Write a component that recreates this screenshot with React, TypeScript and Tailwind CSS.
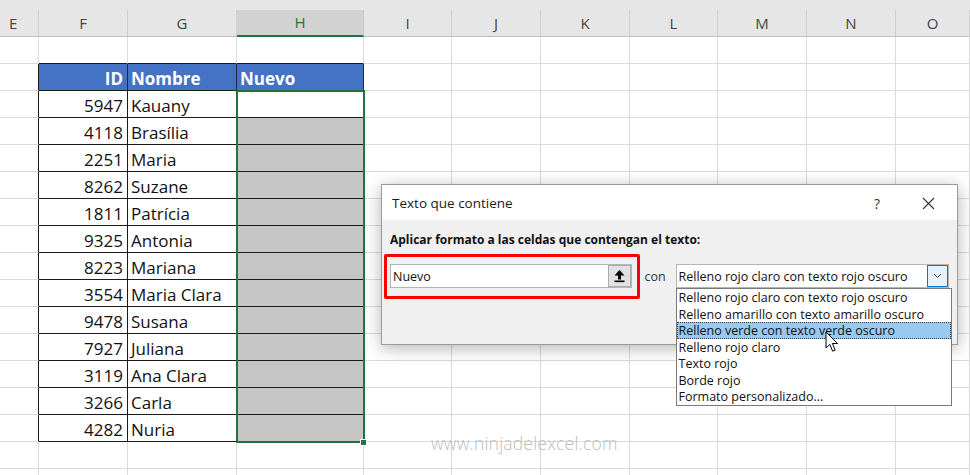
import React from "react";

type Col = { id: string; w: string; head: string };

const COLS: Col[] = [
  { id: "E", w: "w-[39px]", head: "justify-start pl-[9px]" },
  { id: "F", w: "w-[89px]", head: "justify-center" },
  { id: "G", w: "w-[109px]", head: "justify-center" },
  { id: "H", w: "w-[127px]", head: "justify-center" },
  { id: "I", w: "w-[88px]", head: "justify-center" },
  { id: "J", w: "w-[89px]", head: "justify-center" },
  { id: "K", w: "w-[89px]", head: "justify-center" },
  { id: "L", w: "w-[88px]", head: "justify-center" },
  { id: "M", w: "w-[89px]", head: "justify-center" },
  { id: "N", w: "w-[89px]", head: "justify-center" },
  { id: "O", w: "w-[74px]", head: "justify-center" },
];

const PEOPLE: [string, string][] = [
  ["5947", "Kauany"],
  ["4118", "Brasília"],
  ["2251", "Maria"],
  ["8262", "Suzane"],
  ["1811", "Patrícia"],
  ["9325", "Antonia"],
  ["8223", "Mariana"],
  ["3554", "Maria Clara"],
  ["9478", "Susana"],
  ["7927", "Juliana"],
  ["3119", "Ana Clara"],
  ["3266", "Carla"],
  ["4282", "Nuria"],
];

const OPTIONS = [
  "Relleno rojo claro con texto rojo oscuro",
  "Relleno amarillo con texto amarillo oscuro",
  "Relleno verde con texto verde oscuro",
  "Relleno rojo claro",
  "Texto rojo",
  "Borde rojo",
  "Formato personalizado...",
];

const ROWS = 17;

function cellClass(r: number, c: string) {
  const inTable = r >= 1 && r <= 14;
  let cls = "flex h-[27px] shrink-0 items-end border-r border-b border-[#dadada] leading-[23px]";
  if (c === "E" && inTable) cls += " border-r-[#1a1a1a]";
  if (r === 0 && (c === "F" || c === "G" || c === "H")) cls += " border-b-[#1a1a1a]";
  if (r === 1 && (c === "F" || c === "G" || c === "H"))
    cls += " bg-[#4472c4] font-bold text-white border-r-[#1a2a44] border-b-[#1a1a1a]";
  if (r >= 2 && r <= 14 && (c === "F" || c === "G" || c === "H"))
    cls += " border-r-[#1a1a1a] border-b-[#1a1a1a]";
  if (r >= 3 && r <= 14 && c === "H") cls += " bg-[#c6c6c6]";
  if (c === "F") cls += " justify-end pr-[4px]";
  if (c === "G") cls += " pl-[3px]";
  if (c === "H") cls += " pl-[3px]";
  return cls;
}

function cellText(r: number, c: string) {
  if (r === 1) {
    if (c === "F") return "ID";
    if (c === "G") return "Nombre";
    if (c === "H") return "Nuevo";
  }
  if (r >= 2 && r <= 14) {
    const p = PEOPLE[r - 2];
    if (c === "F") return p[0];
    if (c === "G") return p[1];
  }
  return "";
}

function CollapseIcon() {
  return (
    <svg width="11" height="14" viewBox="0 0 11 14">
      <polygon points="5.5,1 10.5,6.5 0.5,6.5" fill="#000" />
      <rect x="4" y="6" width="3" height="4.5" fill="#000" />
      <rect x="0.5" y="11.5" width="10" height="1.6" fill="#000" />
    </svg>
  );
}

function Cursor() {
  return (
    <svg width="15" height="22" viewBox="0 0 15 22" className="absolute left-[825px] top-[331px]">
      <path
        d="M1 1 L1 17 L4.8 13.4 L7.6 20.2 L10.2 19.1 L7.4 12.5 L12.6 12.5 Z"
        fill="#fff"
        stroke="#000"
        strokeWidth="1"
        strokeLinejoin="miter"
      />
    </svg>
  );
}

export default function App() {
  return (
    <div className="relative h-[475px] w-[970px] overflow-hidden bg-white font-['Open_Sans',sans-serif]">
      {/* ─── COLUMN HEADERS ─── */}
      <div className="h-[10px] bg-[#e6e6e6]" />
      <div className="flex h-[27px] bg-[#e6e6e6]">
        {COLS.map((col) => (
          <div
            key={col.id}
            className={
              col.id === "H"
                ? `flex shrink-0 items-center border-r border-b-2 border-r-[#c6c6c6] border-b-[#217346] bg-[#d2d2d2] text-[15px] text-[#217346] ${col.w} ${col.head}`
                : `flex shrink-0 items-center border-r border-b border-r-[#cfcfcf] border-b-[#bdbdbd] text-[15px] text-[#444] ${col.w} ${col.head}`
            }
          >
            {col.id}
          </div>
        ))}
      </div>

      {/* ─── SHEET GRID ─── */}
      <div className="flex flex-col text-[17px] text-[#111]">
        {Array.from({ length: ROWS }, (_, r) => (
          <div key={r} className="flex">
            {COLS.map((col) => (
              <div key={col.id} className={`${cellClass(r, col.id)} ${col.w}`}>
                {cellText(r, col.id)}
              </div>
            ))}
          </div>
        ))}
      </div>

      {/* selection range H3:H15 */}
      <div className="pointer-events-none absolute left-[236px] top-[90px] h-[353px] w-[129px] border-2 border-[#217346]" />
      <div className="absolute left-[360px] top-[439px] h-[7px] w-[7px] border border-white bg-[#217346]" />

      {/* watermark */}
      <span className="absolute left-[431px] top-[430px] text-[17.5px] font-light tracking-[0.2px] text-[#bdbdbd]">
        www.ninjadelexcel.com
      </span>

      {/* ─── DIALOG ─── */}
      <div className="absolute left-[381px] top-[184px] h-[161px] w-[577px] border border-[#9a9a9a] bg-[#f0f0f0] shadow-[0_3px_16px_rgba(0,0,0,0.3)]">
        <div className="flex h-[35px] items-center bg-white pl-[10px] pt-[1px] text-[#1b1b1b]">
          <span className="text-[13.5px]">Texto que contiene</span>
          <span className="ml-auto mr-[42px] text-[14px] text-[#333]">?</span>
          <svg width="13" height="13" viewBox="0 0 13 13" className="mr-[22px]">
            <path d="M1 1 L12 12 M12 1 L1 12" stroke="#333" strokeWidth="1.1" />
          </svg>
        </div>

        <div className="px-[8px] pt-[11px]">
          <p className="text-[12px] font-bold leading-[17px] text-[#111]">
            Aplicar formato a las celdas que contengan el texto:
          </p>

          <div className="mt-[16px] flex items-start text-[12.5px] text-[#111]">
            <div className="flex h-[24px] w-[242px] items-center border border-[#b4b4b4] bg-white pl-[2px]">
              <span className="pt-[2px]">Nuevo</span>
              <div className="ml-auto flex h-[22px] w-[23px] items-center justify-center border border-[#adadad] bg-[#e1e1e1]">
                <CollapseIcon />
              </div>
            </div>
            <span className="ml-[13px] w-[31px] pt-[1px] leading-[24px] text-[#333]">con</span>
            <div className="relative h-[24px] w-[274px] border border-[#b4b4b4] bg-white">
              <span className="block pl-[2px] pt-[1px] leading-[21px]">Relleno rojo claro con texto rojo oscuro</span>
              <div className="absolute right-[0px] top-[0px] flex h-[22px] w-[21px] items-center justify-center border border-[#0078d7] bg-[#e5f1fb]">
                <svg width="9" height="6" viewBox="0 0 9 6">
                  <path d="M1 1 L4.5 4.5 L8 1" fill="none" stroke="#444" strokeWidth="1" />
                </svg>
              </div>

              {/* dropdown list */}
              <div className="absolute left-[-1px] top-[23px] w-[276px] border border-[#7a7a7a] bg-white">
                {OPTIONS.map((o, i) => (
                  <div
                    key={o}
                    className={
                      i === 2
                        ? "h-[16.5px] border border-dotted border-[#3c3c3c] bg-[#99c9ef] pl-[1px] leading-[16px]"
                        : "h-[16.5px] pl-[2px] leading-[18px]"
                    }
                  >
                    {o}
                  </div>
                ))}
              </div>
            </div>
          </div>
        </div>

        {/* highlight box around the input */}
        <div className="pointer-events-none absolute left-[2px] top-[69px] h-[45px] w-[256px] rounded-[2px] border-[3px] border-[#ff0000]" />
      </div>

      <Cursor />
    </div>
  );
}
